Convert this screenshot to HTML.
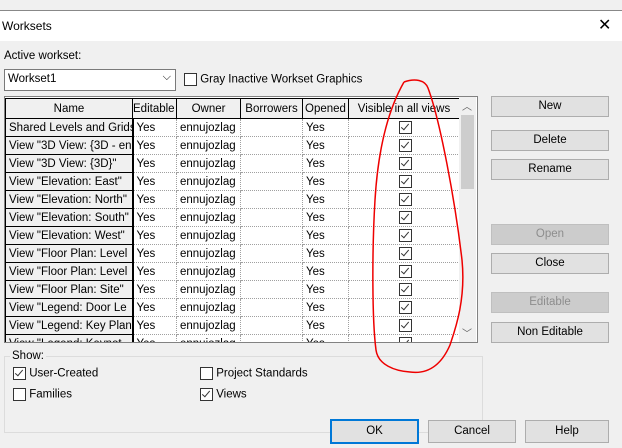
<!DOCTYPE html><html><head><style>
body{margin:0;width:622px;height:448px;background:#f0f0f0;font-family:"Liberation Sans",sans-serif;font-size:11.5px;color:#000;position:relative;overflow:hidden}
.a{position:absolute}
.btn{position:absolute;left:491px;width:116px;height:19px;border:1px solid #adadad;background:#e1e1e1;text-align:center;line-height:19px;font-size:11.5px}
.dis{background:#cccccc;border-color:#bfbfbf;color:#8d8d8d}
table{border-collapse:collapse;position:absolute;table-layout:fixed;width:454px}
td{height:17px;padding:0 0 0 3px;border:1px dotted #a0a0a0;white-space:nowrap;overflow:hidden;background:#fff;font-size:11.5px}
th{height:19px;font-weight:normal;border:1px solid #000;background:#f0f0f0;padding:0;white-space:nowrap;overflow:hidden;font-size:11.5px}
td.n{background:#f0f0f0;border:1px solid #000;border-right:2px solid #000}
.cb{display:inline-block;width:11px;height:11px;border:1px solid #333;background:#fff;position:relative;vertical-align:middle}
.cb.c::after{content:"";position:absolute;left:3px;top:0px;width:3px;height:7px;border:solid #333;border-width:0 1.5px 1.5px 0;transform:rotate(40deg)}
</style></head><body>
<div class="a" style="left:0;top:0;width:622px;height:10px;background:#f0f0f0;border-bottom:1px solid #888"></div>
<div class="a" style="left:0;top:11px;width:622px;height:30px;background:#fff"></div>
<div class="a" style="left:2px;top:19px;font-size:12px">Worksets</div>
<div class="a" style="left:598px;top:15px;font-size:16px">✕</div>
<div class="a" style="left:4px;top:50px">Active workset:</div>
<div class="a" style="left:4px;top:69px;width:170px;height:20px;border:1px solid #7a7a7a;background:#fff"><span style="position:absolute;left:3px;top:3px">Workset1</span><span style="position:absolute;right:4px;top:1px;font-size:11px">⌵</span></div>
<div class="a" style="left:184px;top:73px"><span class="cb"></span> Gray Inactive Workset Graphics</div>
<div class="a" style="left:4px;top:96px;width:472px;height:245px;background:#fff;border:1px solid #828282;overflow:hidden">
<table style="left:0;top:1px">
<colgroup><col style="width:127px"><col style="width:44px"><col style="width:64px"><col style="width:62px"><col style="width:46px"><col style="width:111px"></colgroup>
<tr><th>Name</th><th style="text-align:left">Editable</th><th>Owner</th><th>Borrowers</th><th>Opened</th><th>Visible in all views</th></tr>
<tr><td class="n">Shared Levels and Grids</td><td>Yes</td><td>ennujozlag</td><td></td><td>Yes</td><td style="text-align:center"><span class="cb c"></span></td></tr>
<tr><td class="n">View "3D View: {3D - en</td><td>Yes</td><td>ennujozlag</td><td></td><td>Yes</td><td style="text-align:center"><span class="cb c"></span></td></tr>
<tr><td class="n">View "3D View: {3D}"</td><td>Yes</td><td>ennujozlag</td><td></td><td>Yes</td><td style="text-align:center"><span class="cb c"></span></td></tr>
<tr><td class="n">View "Elevation: East"</td><td>Yes</td><td>ennujozlag</td><td></td><td>Yes</td><td style="text-align:center"><span class="cb c"></span></td></tr>
<tr><td class="n">View "Elevation: North"</td><td>Yes</td><td>ennujozlag</td><td></td><td>Yes</td><td style="text-align:center"><span class="cb c"></span></td></tr>
<tr><td class="n">View "Elevation: South"</td><td>Yes</td><td>ennujozlag</td><td></td><td>Yes</td><td style="text-align:center"><span class="cb c"></span></td></tr>
<tr><td class="n">View "Elevation: West"</td><td>Yes</td><td>ennujozlag</td><td></td><td>Yes</td><td style="text-align:center"><span class="cb c"></span></td></tr>
<tr><td class="n">View "Floor Plan: Level</td><td>Yes</td><td>ennujozlag</td><td></td><td>Yes</td><td style="text-align:center"><span class="cb c"></span></td></tr>
<tr><td class="n">View "Floor Plan: Level</td><td>Yes</td><td>ennujozlag</td><td></td><td>Yes</td><td style="text-align:center"><span class="cb c"></span></td></tr>
<tr><td class="n">View "Floor Plan: Site"</td><td>Yes</td><td>ennujozlag</td><td></td><td>Yes</td><td style="text-align:center"><span class="cb c"></span></td></tr>
<tr><td class="n">View "Legend: Door Le</td><td>Yes</td><td>ennujozlag</td><td></td><td>Yes</td><td style="text-align:center"><span class="cb c"></span></td></tr>
<tr><td class="n">View "Legend: Key Plan</td><td>Yes</td><td>ennujozlag</td><td></td><td>Yes</td><td style="text-align:center"><span class="cb c"></span></td></tr>
<tr><td class="n">View "Legend: Keynot</td><td>Yes</td><td>ennujozlag</td><td></td><td>Yes</td><td style="text-align:center"><span class="cb c"></span></td></tr>
</table>
<div class="a" style="left:454px;top:0;width:17px;height:245px;background:#f0f0f0"></div>
<div class="a" style="left:456px;top:18px;width:13px;height:74px;background:#cdcdcd"></div>
<div class="a" style="left:457px;top:1px;font-size:10px;color:#606060">︿</div>
<div class="a" style="left:457px;top:228px;font-size:10px;color:#606060">﹀</div>
</div>
<div class="btn" style="top:96px">New</div>
<div class="btn" style="top:130px">Delete</div>
<div class="btn" style="top:159px">Rename</div>
<div class="btn dis" style="top:224px">Open</div>
<div class="btn" style="top:253px">Close</div>
<div class="btn dis" style="top:292px">Editable</div>
<div class="btn" style="top:322px">Non Editable</div>
<div class="a" style="left:4px;top:356px;width:477px;height:75px;border:1px solid #dcdcdc"></div>
<div class="a" style="left:10px;top:350px;background:#f0f0f0;padding:0 2px">Show:</div>
<div class="a" style="left:13px;top:367px"><span class="cb c"></span> User-Created</div>
<div class="a" style="left:13px;top:388px"><span class="cb"></span> Families</div>
<div class="a" style="left:200px;top:367px"><span class="cb"></span> Project Standards</div>
<div class="a" style="left:200px;top:388px"><span class="cb c"></span> Views</div>
<div class="btn" style="left:330px;width:85px;top:419px;height:21px;line-height:21px;border:2px solid #0078d7">OK</div>
<div class="btn" style="left:428px;width:86px;top:420px;height:21px;line-height:21px">Cancel</div>
<div class="btn" style="left:525px;width:82px;top:420px;height:21px;line-height:21px">Help</div>
<svg class="a" style="left:0;top:0" width="622" height="448"><path d="M404 82 C415 78 425 80 428 88 C440 120 455 200 462 260 C466 300 455 330 450 345 C440 368 425 374 410 372 C395 371 378 365 376 350 C372 320 372 250 375 200 C378 150 388 110 404 82" fill="none" stroke="#e00" stroke-width="1.5"/></svg>
</body></html>
